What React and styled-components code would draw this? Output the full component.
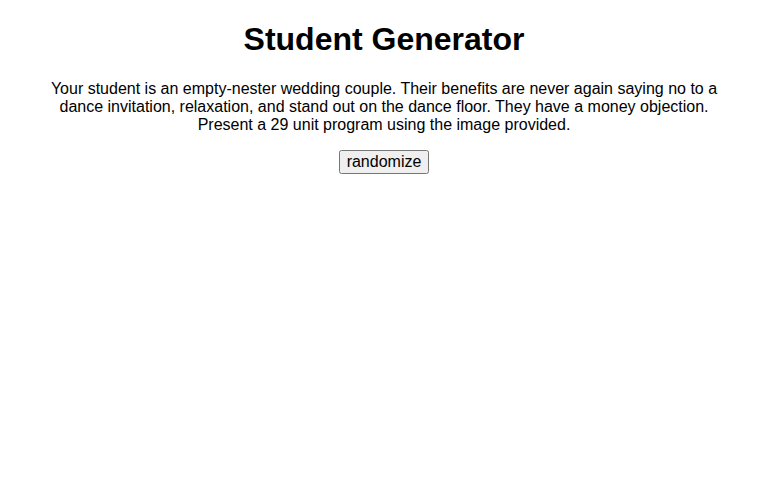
import React from "react";
import styled, { createGlobalStyle } from "styled-components";

const Global = createGlobalStyle`
  html, body { margin: 0; padding: 0; background: #fff; }
  body { font-family: "Liberation Sans", Arial, sans-serif; color: #000; }
`;

const Page = styled.main`
  display: flex;
  flex-direction: column;
  align-items: center;
  text-align: center;
  padding: 0 40px;
`;

const Title = styled.h1`
  font-size: 32px;
  font-weight: bold;
  margin: 21.44px 0;
  line-height: 37px;
`;

const Prompt = styled.p`
  font-size: 16px;
  line-height: 18px;
  margin: 0 0 16px;
`;

const Button = styled.button`
  font-family: "Liberation Sans", Arial, sans-serif;
  font-size: 16px;
  padding: 1px 6px;
  line-height: 18px;
`;

export default function App() {
  return (
    <>
      <Global />
      <Page>
        <Title>Student Generator</Title>
        <Prompt>
          Your student is an empty-nester wedding couple. Their benefits are never again saying no to a dance invitation, relaxation, and stand out on the dance floor. They have a money objection. Present a 29 unit program using the image provided.
        </Prompt>
        <Button>randomize</Button>
      </Page>
    </>
  );
}
